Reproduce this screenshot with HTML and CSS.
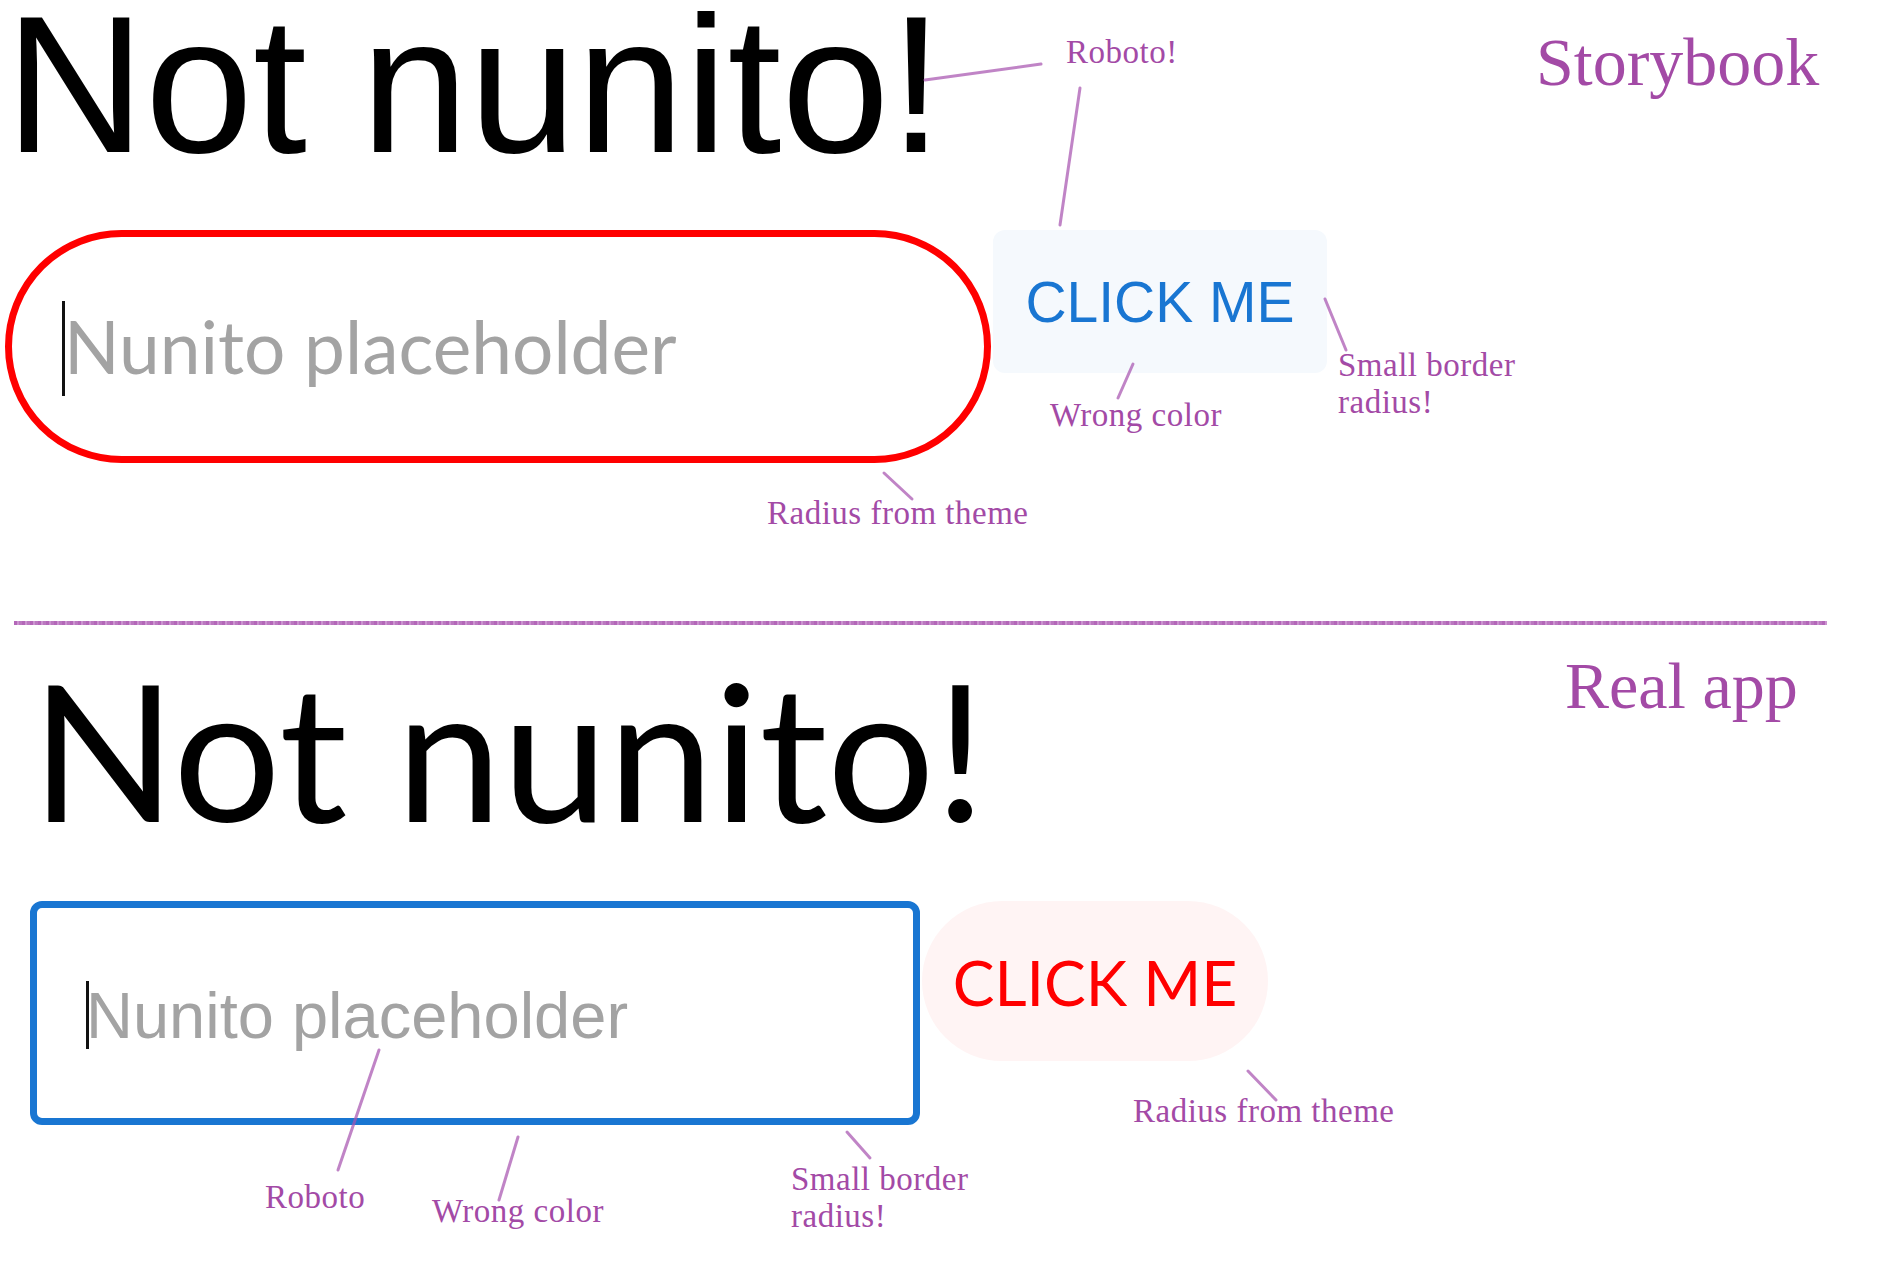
FILE: index.html
```html
<!DOCTYPE html>
<html lang="en">
<head>
<meta charset="utf-8">
<title>Theme comparison</title>
<link rel="stylesheet" href="styles.css">
</head>
<body>
<main class="board">
  <section class="pane pane-story">
    <h1 class="title title-story">Not nunito!</h1>
    <div class="row row-story">
      <div class="field field-story">
        <span class="caret caret-story"></span>
        <span class="placeholder ph-story">Nunito placeholder</span>
      </div>
      <button class="btn btn-story" type="button">CLICK ME</button>
    </div>
  </section>

  <hr class="divider">

  <section class="pane pane-app">
    <h1 class="title title-app">Not nunito!</h1>
    <div class="row row-app">
      <div class="field field-app">
        <span class="caret caret-app"></span>
        <span class="placeholder ph-app">Nunito placeholder</span>
      </div>
      <button class="btn btn-app" type="button">CLICK ME</button>
    </div>
  </section>

  <!-- hand-drawn callouts -->
  <svg class="strokes" width="1882" height="1273" viewBox="0 0 1882 1273" aria-hidden="true">
    <g class="pencil">
      <line x1="925" y1="80" x2="1041" y2="64"/>
      <line x1="1080" y1="88" x2="1060" y2="225"/>
      <line x1="1133" y1="364" x2="1118" y2="398"/>
      <line x1="1325" y1="299" x2="1346" y2="350"/>
      <line x1="884" y1="473" x2="912" y2="499"/>
      <line x1="1248" y1="1071" x2="1276" y2="1100"/>
      <line x1="379" y1="1050" x2="338" y2="1170"/>
      <line x1="518" y1="1137" x2="499" y2="1200"/>
      <line x1="847" y1="1132" x2="870" y2="1158"/>
    </g>
  </svg>

  <span class="heading-note note-storybook">Storybook</span>
  <span class="heading-note note-realapp">Real app</span>

  <span class="note note-roboto-top">Roboto!</span>
  <span class="note note-color-top">Wrong color</span>
  <span class="note note-small-top">Small border<br>radius!</span>
  <span class="note note-theme-top">Radius from theme</span>

  <span class="note note-theme-bottom">Radius from theme</span>
  <span class="note note-roboto-bottom">Roboto</span>
  <span class="note note-color-bottom">Wrong color</span>
  <span class="note note-small-bottom">Small border<br>radius!</span>
</main>
</body>
</html>
```

FILE: styles.css
```css
html, body {
  margin: 0;
  padding: 0;
  background: #ffffff;
}

.board {
  position: relative;
  width: 1882px;
  height: 1273px;
  overflow: hidden;
  font-family: "Liberation Sans", Arial, sans-serif;
}

/* ---------- panes ---------- */
.pane-story {
  padding: 5px 0 0 5px;
}

.pane-app {
  padding: 0 0 0 30px;
}

.title {
  margin: 0;
  font-weight: 400;
  color: #000;
  line-height: 160px;
  white-space: nowrap;
}

.title-story {
  font-family: "Liberation Sans", Arial, sans-serif;
  font-size: 194px;
}

.title-app {
  font-family: Lato, "Noto Sans", sans-serif;
  font-size: 190px;
  margin-top: 43px;
  padding-left: 1px;
}

.row {
  display: flex;
  align-items: flex-start;
  gap: 2px;
}

.row-story {
  margin-top: 65px;
}

.row-app {
  margin-top: 73px;
}

/* ---------- text fields ---------- */
.field {
  box-sizing: border-box;
  display: flex;
  align-items: center;
  background: #fff;
}

.field-story {
  width: 986px;
  height: 233px;
  border: 7px solid #ff0000;
  border-radius: 117px;
  padding-left: 50px;
}

.field-app {
  width: 890px;
  height: 224px;
  border: 7px solid #1976d2;
  border-radius: 12px;
  padding-left: 49px;
}

.caret {
  flex: none;
  width: 3px;
  background: #111;
}

.caret-story {
  height: 95px;
  margin-top: 4px;
}

.caret-app {
  height: 68px;
  margin-top: 4px;
}

.placeholder {
  color: #a3a3a3;
  line-height: 1;
  white-space: nowrap;
}

.ph-story {
  font-family: Lato, "Noto Sans", sans-serif;
  font-size: 73px;
  letter-spacing: 0;
  margin-left: -1px;
}

.ph-app {
  font-family: "Liberation Sans", Arial, sans-serif;
  font-size: 65px;
  margin-top: 4px;
  margin-left: -3px;
}

/* ---------- buttons ---------- */
.btn {
  box-sizing: border-box;
  border: none;
  padding: 0;
  display: flex;
  align-items: center;
  justify-content: center;
  white-space: nowrap;
  cursor: pointer;
}

.btn-story {
  width: 334px;
  height: 143px;
  border-radius: 12px;
  background: #f5f9fd;
  color: #1976d2;
  font-family: "Liberation Sans", Arial, sans-serif;
  font-size: 57px;
}

.btn-app {
  width: 346px;
  height: 160px;
  border-radius: 80px;
  background: #fff4f4;
  color: #ff0000;
  font-family: Lato, "Noto Sans", sans-serif;
  font-size: 62.5px;
}

/* ---------- divider ---------- */
.divider {
  margin: 158px 0 0 14px;
  width: 1813px;
  height: 4px;
  border: none;
  background: repeating-linear-gradient(90deg,
    rgba(166, 76, 172, 0.85) 0 3px,
    rgba(186, 112, 192, 0.75) 3px 5px,
    rgba(172, 90, 178, 0.82) 5px 8px);
}

/* ---------- callouts ---------- */
.strokes {
  position: absolute;
  left: 0;
  top: 0;
  pointer-events: none;
}

.pencil line {
  stroke: rgba(168, 84, 176, 0.72);
  stroke-width: 3;
  stroke-linecap: round;
}

.note,
.heading-note {
  position: absolute;
  color: #a34aa6;
  font-family: "Liberation Serif", "Times New Roman", serif;
  white-space: nowrap;
}

.note {
  font-size: 33px;
  line-height: 37px;
  letter-spacing: 0.5px;
}

.heading-note {
  font-size: 68px;
  line-height: 68px;
}

.note-storybook { left: 1536px; top: 28px; }
.note-realapp   { left: 1565px; top: 652px; font-size: 66px; }

.note-roboto-top  { left: 1066px; top: 34px; }
.note-color-top   { left: 1050px; top: 397px; }
.note-small-top   { left: 1338px; top: 347px; }
.note-theme-top   { left: 767px;  top: 495px; }

.note-theme-bottom  { left: 1133px; top: 1093px; }
.note-roboto-bottom { left: 265px;  top: 1179px; }
.note-color-bottom  { left: 432px;  top: 1193px; }
.note-small-bottom  { left: 791px;  top: 1161px; }
```
